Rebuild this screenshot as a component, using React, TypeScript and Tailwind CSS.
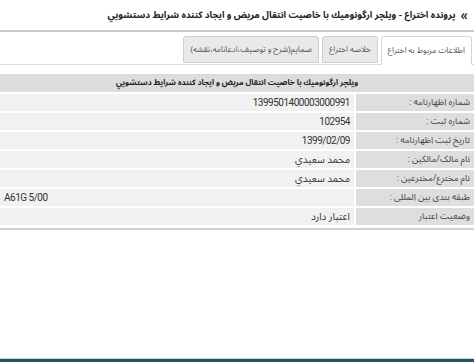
const rows: { label: string; value: string; ltr?: boolean }[] = [
  { label: "شماره اظهارنامه :", value: "1399501400003000991" },
  { label: "شماره ثبت :", value: "102954" },
  { label: "تاريخ ثبت اظهارنامه :", value: "1399/02/09" },
  { label: "نام مالک/مالکین :", value: "محمد سعيدي" },
  { label: "نام مخترع/مخترعین :", value: "محمد سعيدي" },
  { label: "طبقه بندی بین المللی :", value: "A61G 5/00", ltr: true },
  { label: "وضعیت اعتبار", value: "اعتبار دارد" },
]

const tabs = [
  { label: "اطلاعات مربوط به اختراع", active: true },
  { label: "خلاصه اختراع", active: false },
  { label: "ضمایم(شرح و توصیف،ادعانامه،نقشه)", active: false },
]

export default function App() {
  return (
    <div
      dir="rtl"
      className="flex min-h-[362px] w-[474px] flex-col bg-white font-[Roboto,'Noto_Sans_Arabic',sans-serif] text-[#333]"
    >
      <div className="flex h-[32px] items-center gap-[5px] border-b-2 border-[#c8c8c8] pr-[6px]">
        <span className="text-[15px] font-bold leading-none text-[#222]">»</span>
        <h1 className="whitespace-nowrap text-[9.3px] font-bold leading-none text-[#222]">
          پرونده اختراع - ويلچر ارگونوميك با خاصيت انتقال مريض و ايجاد كننده شرايط دستشويي
        </h1>
      </div>

      <div className="mt-[4px] flex items-end gap-[3px] border-b border-[#dcdcdc] pr-[2px]">
        {tabs.map((t) => (
          <div
            key={t.label}
            className={
              t.active
                ? "-mb-px flex h-[29px] items-center rounded-t-[3px] border border-[#d4d4d4] border-b-white bg-white px-[6px] text-[8.1px] text-[#555]"
                : "mb-[1px] flex h-[27px] items-center rounded-t-[3px] border border-[#cfcfcf] bg-[#e9e9e9] px-[6px] text-[8.1px] text-[#555]"
            }
          >
            {t.label}
          </div>
        ))}
      </div>

      <div className="mt-[9px] flex flex-col gap-[2px]">
        <div className="flex h-[18px] items-center justify-center bg-[#dcdcdc] text-[7.8px] font-bold text-[#222]">
          ويلچر ارگونوميك با خاصيت انتقال مريض و ايجاد كننده شرايط دستشويي
        </div>
        {rows.map((r) => (
          <div key={r.label} className="flex h-[17px] gap-[2px]">
            <div className="flex w-[118px] items-center bg-[#dedede] pr-[4px] text-[9px] text-[#444]">
              {r.label}
            </div>
            <div
              className="flex flex-1 items-center bg-[#f1f1f1] px-[4px] text-[10px] tracking-[-0.5px] text-[#333]"
              dir={r.ltr ? "ltr" : "rtl"}
            >
              {r.value}
            </div>
          </div>
        ))}
      </div>

      <div className="mt-[3px] border-b-2 border-[#d0d0d0]" />

      <div className="mt-auto h-[4px] border-t border-[#b9d6dc] bg-[#2d5560]" />
    </div>
  )
}
